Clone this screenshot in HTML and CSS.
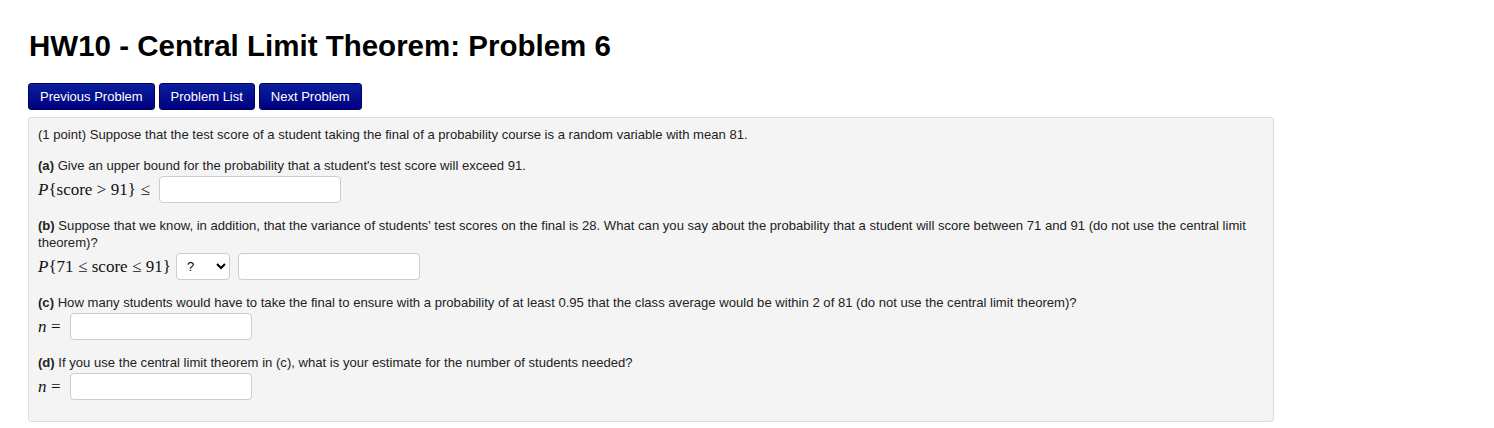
FILE: index.html
```html
<!DOCTYPE html>
<html lang="en">
<head>
    <meta charset="UTF-8">
    <title>HW10 - Central Limit Theorem: Problem 6</title>
    <link rel="stylesheet" href="styles.css">
</head>
<body>
    <div class="page">
        <h1>HW10 - Central Limit Theorem: Problem 6</h1>

        <div class="nav">
            <button class="nav-btn">Previous Problem</button>
            <button class="nav-btn">Problem List</button>
            <button class="nav-btn">Next Problem</button>
        </div>

        <div class="problem">
            <p>(1 point) Suppose that the test score of a student taking the final of a probability course is a random variable with mean 81.</p>

            <div class="part">
                <p><b>(a)</b> Give an upper bound for the probability that a student's test score will exceed 91.</p>
                <div class="answer-row">
                    <span class="math"><i>P</i>{score<span class="rel">&gt;</span>91}<span class="rel">&le;</span></span>
                    <input type="text" class="answer">
                </div>
            </div>

            <div class="part">
                <p><b>(b)</b> Suppose that we know, in addition, that the variance of students' test scores on the final is 28. What can you say about the probability that a student will score between 71 and 91 (do not use the central limit theorem)?</p>
                <div class="answer-row">
                    <span class="math"><i>P</i>{71<span class="rel">&le;</span>score<span class="rel">&le;</span>91}</span>
                    <select class="choice">
                        <option>?</option>
                        <option>&ge;</option>
                        <option>&le;</option>
                    </select>
                    <input type="text" class="answer">
                </div>
            </div>

            <div class="part">
                <p><b>(c)</b> How many students would have to take the final to ensure with a probability of at least 0.95 that the class average would be within 2 of 81 (do not use the central limit theorem)?</p>
                <div class="answer-row">
                    <span class="math"><i>n</i><span class="rel">=</span></span>
                    <input type="text" class="answer">
                </div>
            </div>

            <div class="part">
                <p><b>(d)</b> If you use the central limit theorem in (c), what is your estimate for the number of students needed?</p>
                <div class="answer-row">
                    <span class="math"><i>n</i><span class="rel">=</span></span>
                    <input type="text" class="answer">
                </div>
            </div>
        </div>
    </div>
</body>
</html>
```

FILE: styles.css
```css
body {
    margin: 0;
    font-family: "Liberation Sans", Arial, sans-serif;
    color: #222;
    background: #fff;
}
.page {
    padding: 0 28px;
}
h1 {
    font-size: 29.5px;
    font-weight: bold;
    color: #000;
    margin: 29px 0 20px 1px;
}
.nav {
    display: flex;
    gap: 4px;
    margin-bottom: 7px;
}
.nav-btn {
    font-family: "Liberation Sans", Arial, sans-serif;
    font-size: 13px;
    color: #fff;
    background: linear-gradient(#0a1f9e, #000080);
    border: 1px solid #000066;
    border-radius: 3px;
    height: 27px;
    padding: 0 11px;
    cursor: pointer;
}
.problem {
    width: 1226px;
    background: #f4f4f4;
    border: 1px solid #ddd;
    border-radius: 3px;
    padding: 8px 9px 7px;
    font-size: 13.1px;
    line-height: 17px;
}
.problem p {
    margin: 0 0 14px;
}
.part p {
    margin-bottom: 0;
}
.part {
    margin-bottom: 14px;
}
.answer-row {
    display: flex;
    align-items: center;
    margin-top: 2px;
}
.math {
    font-family: "Liberation Serif", "Times New Roman", serif;
    font-size: 17px;
    color: #111;
    margin-right: 5px;
    white-space: nowrap;
}
.rel {
    margin: 0 0.26em;
}
.answer {
    box-sizing: border-box;
    height: 27px;
    width: 182px;
    padding: 0 5px;
    border: 1px solid #ccc;
    border-radius: 4px;
    background: #fff;
}
.choice {
    height: 27px;
    width: 54px;
    margin-right: 8px;
    border: 1px solid #ccc;
    border-radius: 4px;
    background: #fff;
    font-size: 13px;
    padding: 0 6px;
}
```
